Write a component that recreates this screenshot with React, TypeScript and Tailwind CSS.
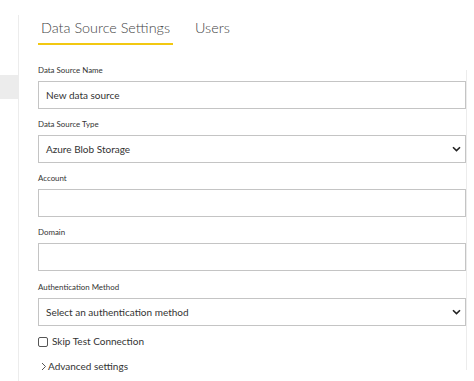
import React from "react";

const Label = ({ children }: { children: React.ReactNode }) => (
  <div className="text-[7.9px] leading-[9px] h-[9px] text-[#333] mb-[6px]">{children}</div>
);

const Chevron = () => (
  <svg width="9" height="6" viewBox="0 0 9 6" className="absolute right-[4px] top-1/2 -translate-y-1/2">
    <path d="M1 1.2 L4.5 4.6 L8 1.2" fill="none" stroke="#222" strokeWidth="1.6" />
  </svg>
);

const Field = ({ value, select }: { value?: string; select?: boolean }) => (
  <div className="relative h-[28px] border border-[#c4c4c4] bg-white flex items-center pl-[7px] text-[10px] text-[#333]">
    {value}
    {select && <Chevron />}
  </div>
);

export default function App() {
  return (
    <div
      className="w-[474px] h-[381px] bg-white flex overflow-hidden"
      style={{ fontFamily: 'Lato, "Open Sans", sans-serif' }}
    >
      <div className="w-[18px] flex flex-col pt-[75px] shrink-0">
        <div className="h-[24px] bg-[#ececec]" />
      </div>
      <div className="w-[1px] bg-[#ececec] mt-[15px] shrink-0" />
      <div className="flex-1 flex">
        <div className="w-[447px] pl-[19px] pt-[21px]">
          <div className="flex items-end gap-[22px] text-[14.4px] font-light text-[#444] leading-none">
            <div className="px-[3px] pb-[8px] border-b-2 border-[#f2c811]">Data Source Settings</div>
            <div className="pb-[8px] border-b-2 border-transparent">Users</div>
          </div>
          <div className="mt-[21px]">
            <Label>Data Source Name</Label>
            <Field value="New data source" />
          </div>
          <div className="mt-[11px]">
            <Label>Data Source Type</Label>
            <Field value="Azure Blob Storage" select />
          </div>
          <div className="mt-[11px]">
            <Label>Account</Label>
            <Field />
          </div>
          <div className="mt-[11px]">
            <Label>Domain</Label>
            <Field />
          </div>
          <div className="mt-[12px]">
            <Label>Authentication Method</Label>
            <Field value="Select an authentication method" select />
          </div>
          <div className="mt-[8px] flex items-center gap-[4px] text-[10px] text-[#333]">
            <div className="w-[10px] h-[10px] border border-[#555] rounded-[2px]" />
            <span>Skip Test Connection</span>
          </div>
          <div className="mt-[10px] flex items-center gap-[1px] pl-[3px] text-[10px] text-[#333]">
            <svg width="6" height="9" viewBox="0 0 6 9">
              <path d="M1 1 L4.5 4.5 L1 8" fill="none" stroke="#555" strokeWidth="1" />
            </svg>
            <span>Advanced settings</span>
          </div>
        </div>
        <div className="w-[1px] bg-[#ececec] mt-[70px] h-[300px]" />
      </div>
    </div>
  );
}
